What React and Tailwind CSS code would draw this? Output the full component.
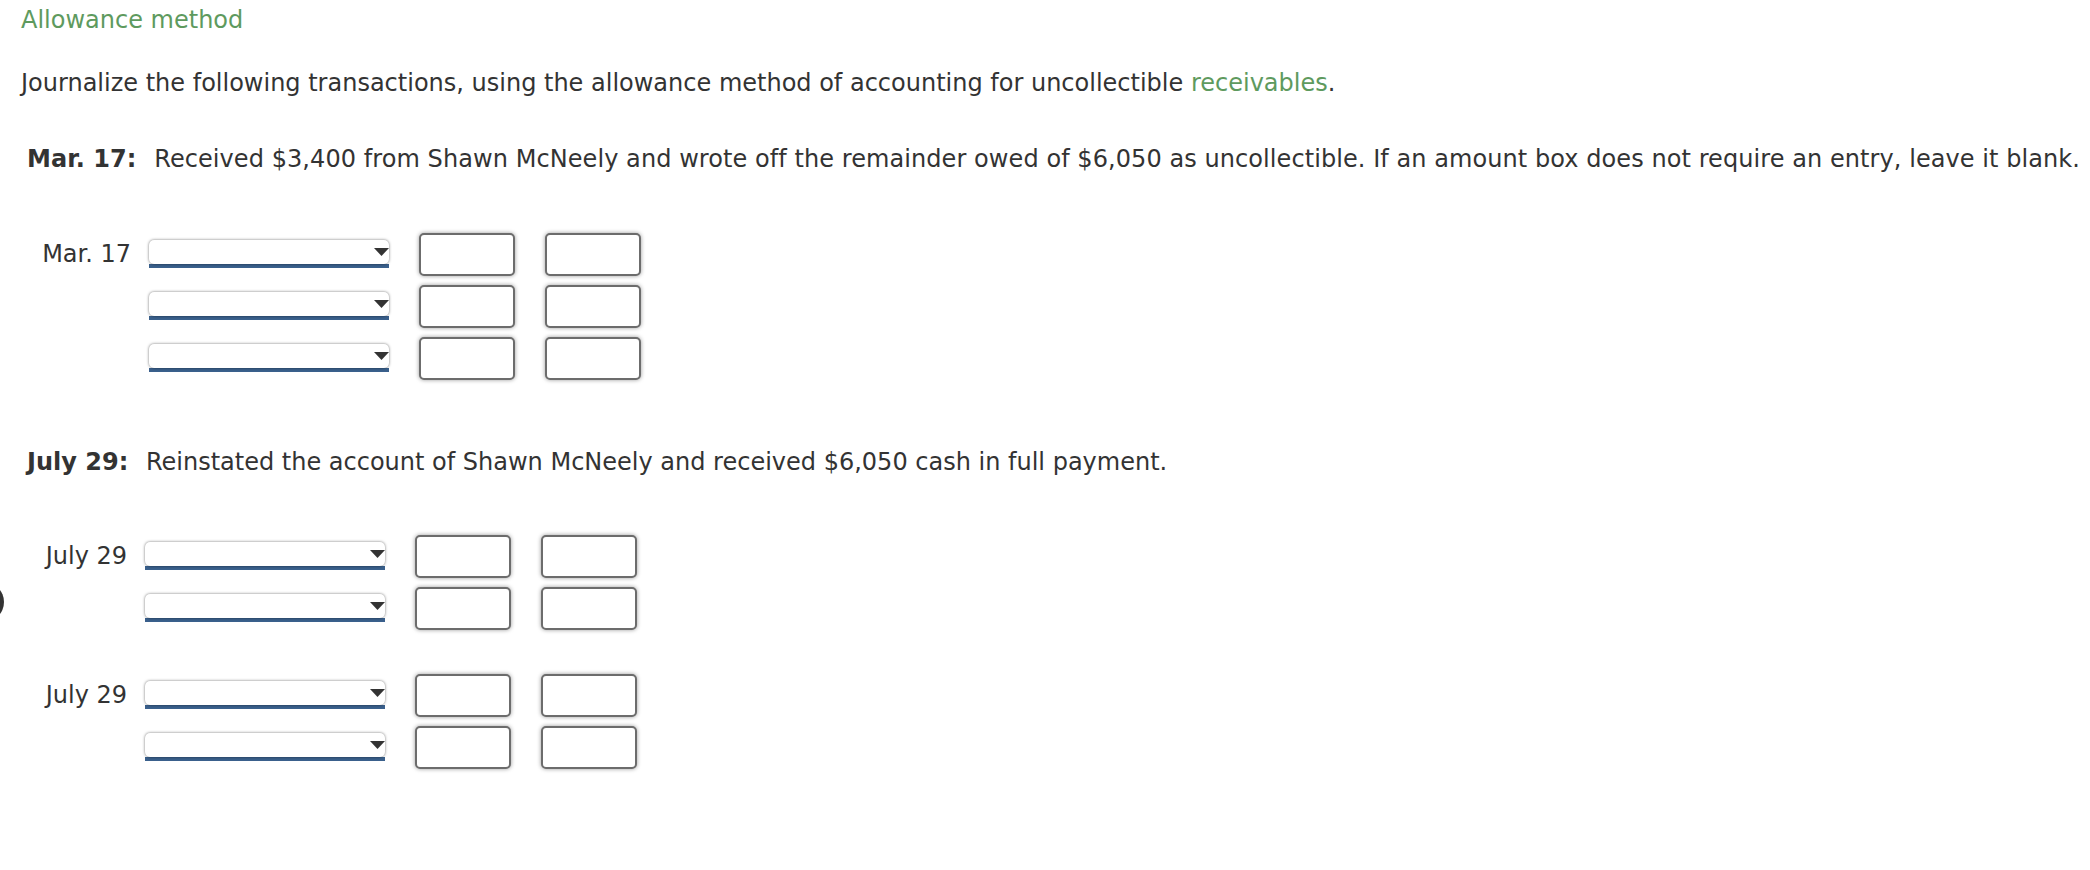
import React from "react";

function Select() {
  return (
    <div className="flex w-[240px] flex-col">
      <div className="relative h-[24px] rounded-[5px] bg-white shadow-[0_0_3px_rgba(0,0,0,0.55)]">
        <svg className="absolute right-0 top-[8px]" width="15" height="8" viewBox="0 0 15 8">
          <polygon points="0,0 15,0 7.5,8" fill="#333" />
        </svg>
      </div>
      <div className="h-[4px] bg-[#3a608c]" />
    </div>
  );
}

function Box() {
  return (
    <div className="h-[43px] w-[96px] rounded-[5px] border-2 border-[#6c6c6c] bg-white shadow-[0_0_4px_rgba(0,0,0,0.4)]" />
  );
}

function Row({ label, labelW }) {
  return (
    <div className="flex h-[52px] items-center">
      <div className={`${labelW} shrink-0 pr-[18px] text-right`}>{label}</div>
      <Select />
      <div className="ml-[30px]">
        <Box />
      </div>
      <div className="ml-[30px]">
        <Box />
      </div>
    </div>
  );
}

export default function App() {
  return (
    <div
      className="relative min-h-[870px] w-full overflow-hidden bg-white text-[24px] leading-[28px] text-[#333]"
      style={{ fontFamily: '"DejaVu Sans", Verdana, sans-serif' }}
    >
      <div className="absolute left-[-36px] top-[582px] h-[40px] w-[40px] rounded-full bg-[#333]" />

      <div className="pl-[21px] pt-[6px] text-[#5e9a5e]">Allowance method</div>

      <div className="mt-[35px] pl-[21px]">
        Journalize the following transactions, using the allowance method of accounting for uncollectible{" "}
        <span className="text-[#5e9a5e]">receivables</span>.
      </div>

      <div className="mt-[48px] whitespace-nowrap pl-[27px] tracking-[0.07px]">
        <span className="font-bold">Mar. 17:</span>
        <span className="pl-[10px]">
          {" "}
          Received $3,400 from Shawn McNeely and wrote off the remainder owed of $6,050 as uncollectible. If an amount
          box does not require an entry, leave it blank.
        </span>
      </div>

      <div className="mt-[55px]">
        <Row label="Mar. 17" labelW="w-[149px]" />
        <Row label="" labelW="w-[149px]" />
        <Row label="" labelW="w-[149px]" />
      </div>

      <div className="mt-[64px] whitespace-nowrap pl-[27px]">
        <span className="font-bold">July 29:</span>
        <span className="pl-[10px]">
          {" "}
          Reinstated the account of Shawn McNeely and received $6,050 cash in full payment.
        </span>
      </div>

      <div className="mt-[54px]">
        <Row label="July 29" labelW="w-[145px]" />
        <Row label="" labelW="w-[145px]" />
      </div>

      <div className="mt-[35px]">
        <Row label="July 29" labelW="w-[145px]" />
        <Row label="" labelW="w-[145px]" />
      </div>
    </div>
  );
}
